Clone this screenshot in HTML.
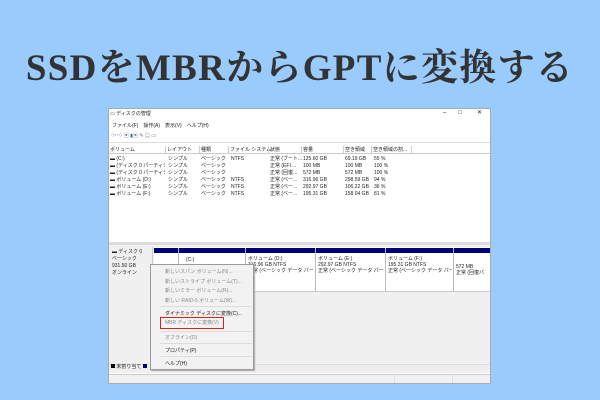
<!DOCTYPE html>
<html><head><meta charset="utf-8"><style>
*{margin:0;padding:0;box-sizing:border-box}
body{width:600px;height:400px;background:#99cbfd;position:relative;overflow:hidden;font-family:"Liberation Sans","Noto Sans CJK JP",sans-serif}
.t{position:absolute;left:0;width:600px;top:37px;text-align:center;font-family:"Liberation Serif","Noto Serif CJK SC",serif;font-weight:bold;font-size:37px;color:#333;letter-spacing:1.3px}
.a{position:absolute;white-space:nowrap;font-size:5px;color:#222;line-height:6px}
.win{position:absolute;left:108px;top:108px;width:383px;height:276px;background:#fff;border:1px solid #aaa}
.g{color:#888}
.p{overflow:hidden}
</style></head><body>
<div class="t">SSDをMBRからGPTに変換する</div>
<div class="win"></div>
<div class="a" style="left:110px;top:111px;font-size:5px">▭ ディスクの管理</div>
<div class="a" style="left:443px;top:110px;font-size:6px">–</div>
<div class="a" style="left:458px;top:110px;font-size:6px">□</div>
<div class="a" style="left:477px;top:110px;font-size:6px">✕</div>
<div class="a" style="left:112px;top:123px">ファイル(F)　操作(A)　表示(V)　ヘルプ(H)</div>
<div class="a" style="left:111px;top:133px;color:#567">⇦ ⇨ ▣ <span style="color:#26c">▮</span>▣ ✎ ▤ ▭</div>
<div style="position:absolute;left:109px;top:142px;width:381px;height:1px;background:#ddd"></div>
<div style="position:absolute;left:109px;top:146px;width:381px;height:8px;border-bottom:1px solid #ccc"></div>
<div class="a" style="left:110px;top:147px">ボリューム</div>
<div class="a" style="left:167px;top:147px">レイアウト</div>
<div class="a" style="left:201px;top:147px">種類</div>
<div class="a" style="left:230px;top:147px">ファイル システム</div>
<div class="a" style="left:270px;top:147px">状態</div>
<div class="a" style="left:303px;top:147px">容量</div>
<div class="a" style="left:345px;top:147px">空き領域</div>
<div class="a" style="left:373px;top:147px">空き領域の割...</div>
<div style="position:absolute;left:165px;top:146px;width:1px;height:8px;background:#ccc"></div>
<div style="position:absolute;left:199px;top:146px;width:1px;height:8px;background:#ccc"></div>
<div style="position:absolute;left:228px;top:146px;width:1px;height:8px;background:#ccc"></div>
<div style="position:absolute;left:268px;top:146px;width:1px;height:8px;background:#ccc"></div>
<div style="position:absolute;left:301px;top:146px;width:1px;height:8px;background:#ccc"></div>
<div style="position:absolute;left:343px;top:146px;width:1px;height:8px;background:#ccc"></div>
<div style="position:absolute;left:371px;top:146px;width:1px;height:8px;background:#ccc"></div>
<div style="position:absolute;left:411px;top:146px;width:1px;height:8px;background:#ccc"></div>
<div class="a p" style="left:110px;top:156px;width:55px;line-height:7px">▬ (C:)<br>▬ (ディスク 0 パーティシ...<br>▬ (ディスク 0 パーティシ...<br>▬ ボリューム (D:)<br>▬ ボリューム (E:)<br>▬ ボリューム (F:)</div>
<div class="a" style="left:168px;top:156px;line-height:7px">シンプル<br>シンプル<br>シンプル<br>シンプル<br>シンプル<br>シンプル</div>
<div class="a" style="left:201px;top:156px;line-height:7px">ベーシック<br>ベーシック<br>ベーシック<br>ベーシック<br>ベーシック<br>ベーシック</div>
<div class="a" style="left:231px;top:156px;line-height:7px">NTFS<br><br><br>NTFS<br>NTFS<br>NTFS</div>
<div class="a" style="left:270px;top:156px;line-height:7px">正常 (ブート...<br>正常 (EFI ...<br>正常 (回復...<br>正常 (ベー...<br>正常 (ベー...<br>正常 (ベー...</div>
<div class="a" style="left:303px;top:156px;line-height:7px">125.60 GB<br>100 MB<br>572 MB<br>316.96 GB<br>292.97 GB<br>195.31 GB</div>
<div class="a" style="left:345px;top:156px;line-height:7px">69.19 GB<br>100 MB<br>572 MB<br>298.59 GB<br>106.22 GB<br>158.04 GB</div>
<div class="a" style="left:374px;top:156px;line-height:7px">55 %<br>100 %<br>100 %<br>94 %<br>36 %<br>81 %</div>
<div style="position:absolute;left:109px;top:242px;width:381px;height:3px;background:#ddd"></div>
<div style="position:absolute;left:109px;top:245px;width:381px;height:128px;background:#f0f0f0"></div>
<div style="position:absolute;left:109px;top:247px;width:44px;height:44px;background:#f0f0f0;border-right:1px solid #ccc"></div>
<div class="a" style="left:112px;top:249px;line-height:7px">▬ ディスク 0<br>ベーシック<br>931.50 GB<br>オンライン</div>
<div style="position:absolute;left:154px;top:247px;width:336px;height:45px;background:#fff"></div>
<div style="position:absolute;left:154px;top:248px;width:336px;height:5px;background:#00007a"></div>
<div style="position:absolute;left:178px;top:248px;width:1px;height:44px;background:#fff;border-left:1px solid #bbb"></div>
<div style="position:absolute;left:245px;top:248px;width:1px;height:44px;background:#bbb"></div>
<div style="position:absolute;left:315px;top:248px;width:1px;height:44px;background:#bbb"></div>
<div style="position:absolute;left:385px;top:248px;width:1px;height:44px;background:#bbb"></div>
<div style="position:absolute;left:453px;top:248px;width:1px;height:44px;background:#bbb"></div>
<div style="position:absolute;left:154px;top:291px;width:336px;height:1px;background:#ccc"></div>
<div class="a" style="left:186px;top:257px">(C:)</div>
<div class="a p" style="left:248px;top:256px;width:66px;line-height:6px">ボリューム (D:)<br>316.96 GB NTFS<br>正常 (ベーシック データ パーティ</div>
<div class="a p" style="left:318px;top:256px;width:66px;line-height:6px">ボリューム (E:)<br>292.97 GB NTFS<br>正常 (ベーシック データ パーティ</div>
<div class="a p" style="left:388px;top:256px;width:64px;line-height:6px">ボリューム (F:)<br>195.31 GB NTFS<br>正常 (ベーシック データ パーテ</div>
<div class="a p" style="left:456px;top:264px;width:33px;line-height:6px">572 MB<br>正常 (回復パ</div>
<div style="position:absolute;left:109px;top:364px;width:381px;height:6px;background:#eee;border-top:1px solid #ddd"></div>
<div class="a" style="left:111px;top:364px"><span style="display:inline-block;width:4px;height:4px;background:#000"></span> 未割り当て <span style="display:inline-block;width:4px;height:4px;background:#00007a"></span></div>
<div style="position:absolute;left:109px;top:374px;width:381px;height:9px;background:#f0f0f0;border-top:1px solid #ccc"></div>
<div style="position:absolute;left:394px;top:374px;width:1px;height:9px;background:#ddd"></div>
<div style="position:absolute;left:452px;top:374px;width:1px;height:9px;background:#ddd"></div>
<div style="position:absolute;left:150px;top:264px;width:104px;height:106px;background:#f2f2f2;border:1px solid #999;box-shadow:1px 1px 1px #aaa"></div>
<div class="a g" style="left:165px;top:268px;line-height:9.5px">新しいスパン ボリューム(N)...<br>新しいストライプ ボリューム(T)...<br>新しいミラー ボリューム(R)...<br>新しい RAID-5 ボリューム(W)...</div>
<div style="position:absolute;left:160px;top:306px;width:92px;height:1px;background:#ddd"></div>
<div class="a" style="left:165px;top:311px">ダイナミック ディスクに変換(C)...</div>
<div style="position:absolute;left:160px;top:317px;width:64px;height:12px;border:1.5px solid #e02020"></div>
<div class="a g" style="left:165px;top:320px">MBR ディスクに変換(V)</div>
<div style="position:absolute;left:160px;top:331px;width:92px;height:1px;background:#ddd"></div>
<div class="a g" style="left:165px;top:335px">オフライン(O)</div>
<div style="position:absolute;left:160px;top:343px;width:92px;height:1px;background:#ddd"></div>
<div class="a" style="left:165px;top:348px">プロパティ(P)</div>
<div style="position:absolute;left:160px;top:356px;width:92px;height:1px;background:#ddd"></div>
<div class="a" style="left:165px;top:361px">ヘルプ(H)</div>
</body></html>
